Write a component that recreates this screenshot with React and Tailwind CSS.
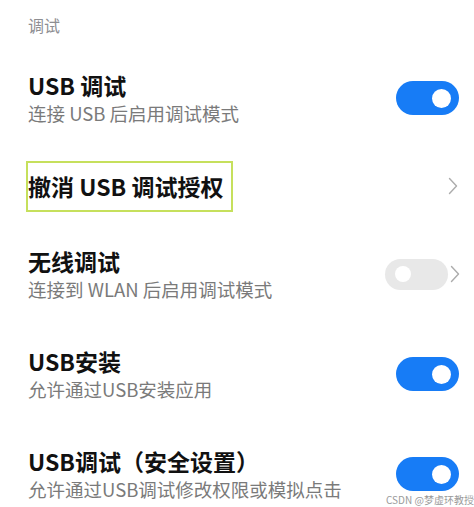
import React from "react";

const font = { fontFamily: '"Noto Sans CJK SC", "Noto Sans", sans-serif' };

const Toggle = ({ on }) =>
  on ? (
    <div className="w-[63px] h-[34px] rounded-full bg-[#177cf6] flex items-center justify-end pr-[8px]">
      <div className="w-[19px] h-[19px] rounded-full bg-white" />
    </div>
  ) : (
    <div className="w-[63px] h-[31px] rounded-full bg-[#e8e8e8] flex items-center pl-[10px]">
      <div className="w-[16px] h-[16px] rounded-full bg-white" />
    </div>
  );

const Chevron = () => (
  <svg width="10" height="18" viewBox="0 0 10 18" fill="none">
    <path d="M1.5 1.5 L8.5 9 L1.5 16.5" stroke="#acacac" strokeWidth="1.4" strokeLinecap="round" strokeLinejoin="round" />
  </svg>
);

const Row = ({ title, sub, children }) => (
  <div className="h-[100px] flex items-center justify-between pl-[28px] pr-[15px]">
    <div className="flex flex-col">
      <span className="text-[23px] leading-[28px] font-bold text-[#111]">{title}</span>
      <span className="mt-[2px] text-[18.5px] leading-[24px] text-[#7a7a7a]">{sub}</span>
    </div>
    {children}
  </div>
);

export default function App() {
  return (
    <div className="relative w-[474px] h-[507px] overflow-hidden bg-white" style={font}>
      <div className="h-[48px] pl-[28px] pt-[13px]">
        <span className="text-[16px] leading-[24px] text-[#8e8e92]">调试</span>
      </div>

      <Row title="USB 调试" sub="连接 USB 后启用调试模式">
        <Toggle on />
      </Row>

      <div className="h-[76px] flex items-center justify-between pl-[26px] pr-[16px]">
        <div className="h-[51px] w-[207px] border-2 border-[#c6e05c] flex items-center">
          <span className="text-[23px] leading-[28px] font-bold text-[#111] whitespace-nowrap">撤消 USB 调试授权</span>
        </div>
        <Chevron />
      </div>

      <Row title="无线调试" sub="连接到 WLAN 后启用调试模式">
        <div className="flex items-center gap-[2px] -mr-[1px]">
          <Toggle />
          <Chevron />
        </div>
      </Row>

      <Row title="USB安装" sub="允许通过USB安装应用">
        <Toggle on />
      </Row>

      <Row title="USB调试（安全设置）" sub="允许通过USB调试修改权限或模拟点击">
        <Toggle on />
      </Row>

      <span className="absolute left-[386px] top-[494px] text-[10px] leading-[12px] text-[#9a9a9a] whitespace-nowrap">
        CSDN @梦虚环教授
      </span>
    </div>
  );
}
